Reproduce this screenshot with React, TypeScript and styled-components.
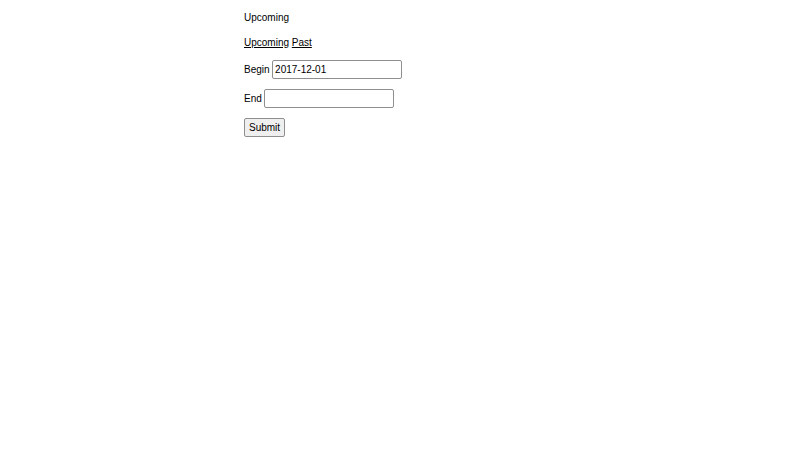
import { createGlobalStyle } from "styled-components";
import styled from "styled-components";

const GlobalStyle = createGlobalStyle`
  body {
    margin: 0;
    background: #ffffff;
    font-family: "Liberation Sans", Arial, sans-serif;
    font-size: 10px;
    color: #000000;
  }
`;

const Page = styled.div`
  padding: 11px 0 0 244px;
`;

const Heading = styled.div`
  line-height: 14px;
  margin-bottom: 11px;
`;

const Tabs = styled.div`
  line-height: 14px;
  margin-bottom: 10px;
`;

const TabLink = styled.a`
  color: #000000;
  text-decoration: underline;
  cursor: pointer;
`;

const Form = styled.form`
  display: flex;
  flex-direction: column;
  align-items: flex-start;
  gap: 10px;
`;

const Field = styled.label`
  display: flex;
  align-items: center;
  gap: 2.5px;
`;

const TextInput = styled.input`
  box-sizing: border-box;
  width: 130px;
  height: 19px;
  padding: 1px 2px;
  border: 1px solid #8f8f8f;
  border-radius: 2px;
  font-family: inherit;
  font-size: 10px;
`;

const SubmitButton = styled.button`
  box-sizing: border-box;
  height: 19px;
  padding: 0 4px;
  border: 1px solid #8f8f8f;
  border-radius: 2px;
  background: #efefef;
  font-family: inherit;
  font-size: 10px;
`;

export default function App() {
  return (
    <>
      <GlobalStyle />
      <Page>
        <Heading>Upcoming</Heading>
        <Tabs>
          <TabLink>Upcoming</TabLink> <TabLink>Past</TabLink>
        </Tabs>
        <Form onSubmit={(e) => e.preventDefault()}>
          <Field>
            Begin
            <TextInput type="text" defaultValue="2017-12-01" />
          </Field>
          <Field>
            End
            <TextInput type="text" />
          </Field>
          <SubmitButton type="submit">Submit</SubmitButton>
        </Form>
      </Page>
    </>
  );
}
